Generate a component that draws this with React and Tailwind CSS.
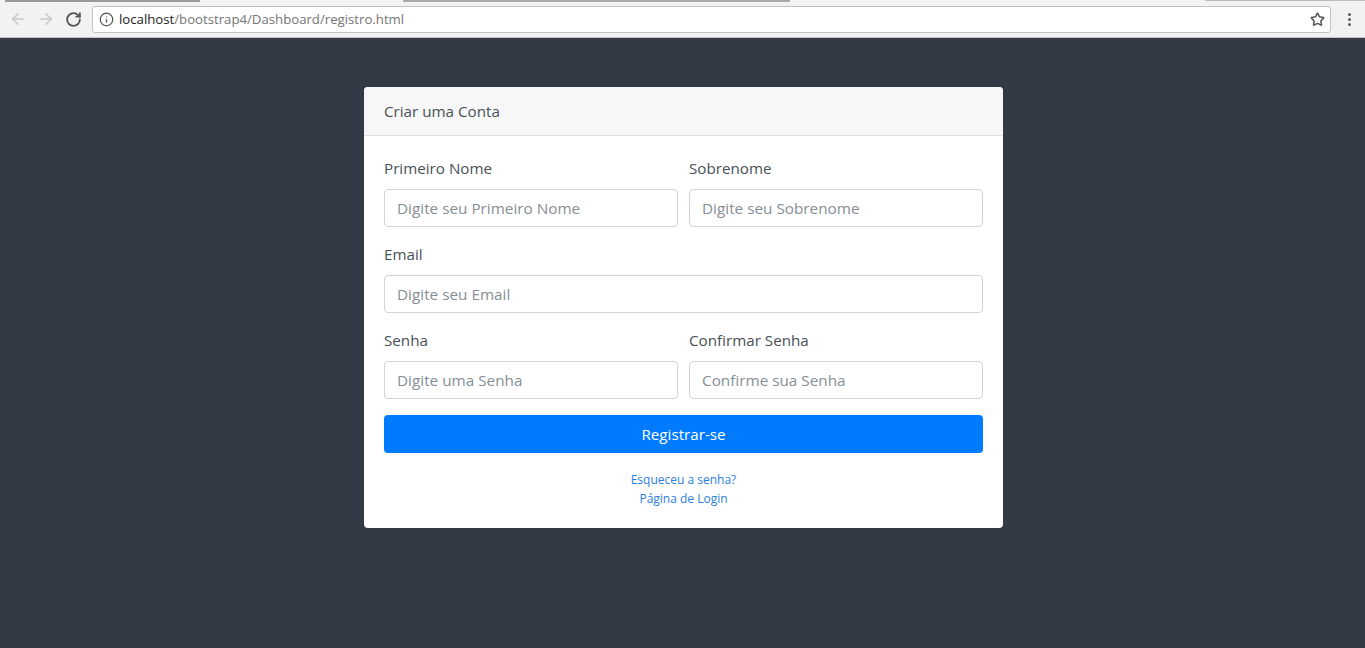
import React from 'react';
import { ArrowLeft, ArrowRight, RotateCw, Info, Star } from 'lucide-react';

const FONT = "font-['Open_Sans','Noto_Sans',sans-serif]";

const Field = ({ label, placeholder }) => (
  <div className="flex-1 min-w-0">
    <label className="block h-[24px] mb-[8px] text-[15.2px] leading-[23px] text-[#495057]">{label}</label>
    <input
      type="text"
      placeholder={placeholder}
      className="block w-full h-[38px] px-[12px] text-[15.3px] bg-white border border-[#ced4da] rounded-[4px] outline-none placeholder:text-[#868e96]"
    />
  </div>
);

const Browser = () => (
  <div className="h-[38px] pt-[1px] bg-[#f2f2f2] border-b border-[#c4c4c4] relative flex items-center pl-[8px] pr-[8px]">
    {/* tab strip remnants */}
    <div className="absolute top-0 left-[5px] w-[195px] h-[2px] bg-[#9a9a9a]" />
    <div className="absolute top-0 left-[403px] w-[387px] h-[2px] bg-[#a8a8a8]" />
    <div className="absolute top-0 left-[1205px] right-0 h-[1px] bg-[#bdbdbd]" />
    <ArrowLeft size={18} strokeWidth={2} className="text-[#c8c8c8] ml-[1px]" />
    <ArrowRight size={18} strokeWidth={2} className="text-[#c8c8c8] ml-[10px]" />
    <RotateCw size={17} strokeWidth={2.6} className="text-[#555555] ml-[10px]" />
    <div className="ml-[10px] w-[1239px] h-[27px] bg-white border border-[#c2c2c2] rounded-[3px] flex items-center pl-[6px] pr-[5px]">
      <Info size={15} strokeWidth={2} className="text-[#555555]" />
      <span className="ml-[5px] pt-[1px] text-[13.2px] text-[#222222] font-['Open_Sans',sans-serif]">
        localhost<span className="text-[#757575]">/bootstrap4/Dashboard/registro.html</span>
      </span>
      <Star size={15} strokeWidth={2.4} className="ml-auto text-[#555555]" />
    </div>
    <div className="ml-[17px] flex flex-col gap-[2px]">
      <span className="w-[3px] h-[3px] rounded-full bg-[#5a5a5a]" />
      <span className="w-[3px] h-[3px] rounded-full bg-[#5a5a5a]" />
      <span className="w-[3px] h-[3px] rounded-full bg-[#5a5a5a]" />
    </div>
  </div>
);

const App = () => {
  return (
    <div className={`h-[648px] overflow-hidden bg-[#343a45] ${FONT}`}>
      <Browser />
      <div className="w-[639px] mt-[49px] mx-auto translate-x-[1px] bg-white rounded-[4px] overflow-hidden">
        <div className="h-[49px] pt-[1px] px-[20px] flex items-center bg-[#f7f7f7] border-b border-[#dfdfdf] text-[15.2px] text-[#495057]">
          Criar uma Conta
        </div>
        <form className="px-[20px] pt-[21px] pb-[20px]">
          <div className="flex gap-[11px] mb-[16px]">
            <Field label="Primeiro Nome" placeholder="Digite seu Primeiro Nome" />
            <Field label="Sobrenome" placeholder="Digite seu Sobrenome" />
          </div>
          <div className="mb-[16px]">
            <Field label="Email" placeholder="Digite seu Email" />
          </div>
          <div className="flex gap-[11px] mb-[16px]">
            <Field label="Senha" placeholder="Digite uma Senha" />
            <Field label="Confirmar Senha" placeholder="Confirme sua Senha" />
          </div>
          <button type="button" className="block w-full h-[38px] pt-[1px] bg-[#007bff] text-white text-[15.2px] rounded-[4px]">
            Registrar-se
          </button>
          <div className="mt-[17px] text-center text-[12px] leading-[19px] text-[#2a80e0]">
            <a className="block">Esqueceu a senha?</a>
            <a className="block">Página de Login</a>
          </div>
        </form>
      </div>
    </div>
  );
};

export default App;
